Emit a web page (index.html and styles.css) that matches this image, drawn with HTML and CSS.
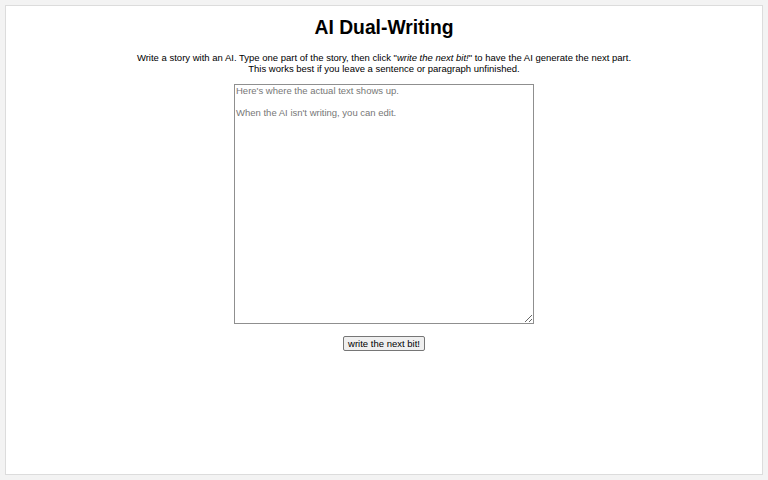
FILE: index.html
```html
<!DOCTYPE html>
<html lang="en">
<head>
<meta charset="utf-8">
<title>AI Dual-Writing</title>
<link rel="stylesheet" href="styles.css">
</head>
<body>
<main class="card">
  <h1 class="title">AI Dual-Writing</h1>
  <p class="intro">
    Write a story with an AI. Type one part of the story, then click "<em>write the next bit!</em>" to have the AI generate the next part.<br>
    This works best if you leave a sentence or paragraph unfinished.
  </p>
  <textarea class="story" placeholder="Here's where the actual text shows up.

When the AI isn't writing, you can edit."></textarea>
  <div class="actions">
    <button class="next-btn" type="button">write the next bit!</button>
  </div>
</main>
</body>
</html>
```

FILE: styles.css
```css
* { box-sizing: border-box; }

html, body {
  height: 100%;
}

body {
  margin: 0;
  padding: 5px;
  background: #f3f3f3;
  font-family: "Liberation Sans", Arial, sans-serif;
  font-size: 9.5px;
  color: #000;
}

.card {
  height: 100%;
  background: #fff;
  border: 1px solid #dcdcdc;
  display: flex;
  flex-direction: column;
  align-items: center;
}

.title {
  margin: 10px 0 0;
  font-size: 19.3px;
  line-height: 24px;
  font-weight: bold;
}

.intro {
  margin: 12px 0 0;
  text-align: center;
  line-height: 11px;
}

.story {
  margin-top: 10px;
  width: 300px;
  height: 240px;
  padding: 0 1px 1px;
  border: 1px solid #8f8f8f;
  font-family: "Liberation Sans", Arial, sans-serif;
  font-size: 9.5px;
  line-height: 11px;
  resize: both;
}

.story::placeholder {
  color: #777;
}

.actions {
  margin-top: 12px;
}

.next-btn {
  font-family: "Liberation Sans", Arial, sans-serif;
  font-size: 9.5px;
  padding: 1px 4px;
  line-height: 11px;
  color: #000;
  background: #efefef;
  border: 1px solid #767676;
  border-radius: 2px;
}
```
